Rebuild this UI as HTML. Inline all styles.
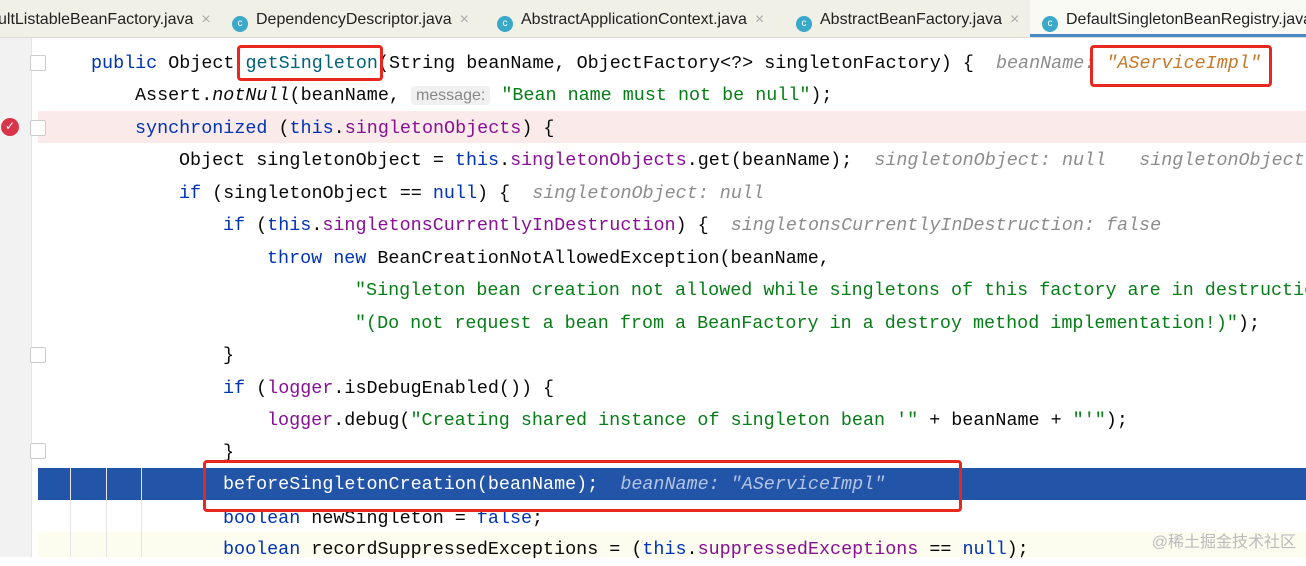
<!DOCTYPE html><html><head><style>
body{margin:0;width:1306px;height:557px;overflow:hidden;background:#fff;position:relative;font-family:"Liberation Mono",monospace}
.tabs{position:absolute;left:0;top:0;width:1306px;height:37px;background:#f0f0e6;border-bottom:1px solid #dcdcd2;font-family:"Liberation Sans",sans-serif;font-size:16px;color:#222}
.tab{position:absolute;top:0;height:37px;line-height:40px;white-space:nowrap}
.ic{display:inline-block;width:16px;height:16px;border-radius:50%;background:#3aa8c9;color:#fff;font-size:10px;line-height:16px;text-align:center;vertical-align:-2px;margin-right:8px}
.x{color:#aaa;margin-left:8px}
.gut{position:absolute;left:0;top:38px;width:31px;height:519px;background:#f2f2f2;border-right:1px solid #e4e4e4}
.ln{position:absolute;left:0;width:1306px;height:32px;font-size:18.4px;line-height:32px;white-space:pre;color:#080808}
.k{color:#0033b3}.s{color:#067d17}.f{color:#871094}.m{color:#00627a}
.h{color:#8c8c8c;font-style:italic}.o{color:#c7782b;font-style:italic}
.box{position:absolute;border:3px solid #e8281e;border-radius:4px}
.fold{position:absolute;left:30px;width:14px;height:14px;border:1px solid #ccc;background:#fff;border-radius:2px}
.g{position:absolute;width:1px;background:#e6e6e6}
.pill{font-family:"Liberation Sans",sans-serif;font-size:16px;color:#888;background:#f0f0f0;border-radius:4px;padding:1px 5px}
</style></head><body>
<div class="tabs">
<div class="tab" style="left:-2px">ultListableBeanFactory.java<span class="x">×</span></div>
<div class="tab" style="left:232px"><span class="ic">c</span>DependencyDescriptor.java<span class="x">×</span></div>
<div class="tab" style="left:497px"><span class="ic">c</span>AbstractApplicationContext.java<span class="x">×</span></div>
<div class="tab" style="left:796px"><span class="ic">c</span>AbstractBeanFactory.java<span class="x">×</span></div>
<div class="tab" style="left:1030px;width:290px;padding-left:12px;background:#fafaf5;border-bottom:3px solid #4a88c7;box-sizing:border-box;height:37px"><span class="ic">c</span>DefaultSingletonBeanRegistry.java</div>
</div>
<div class="gut"></div>
<div style="position:absolute;left:38px;top:111px;width:1268px;height:32px;background:#fbeaea"></div>
<div style="position:absolute;left:38px;top:468px;width:1268px;height:32px;background:#2254a8"></div>
<div style="position:absolute;left:38px;top:532px;width:1268px;height:25px;background:#fcfcef"></div>
<div class="g" style="left:70px;top:468px;height:89px"></div>
<div class="g" style="left:106px;top:468px;height:89px"></div>
<div class="g" style="left:141px;top:468px;height:89px"></div>
<div class="fold" style="top:55px"></div><div class="fold" style="top:120px"></div>
<div class="fold" style="top:347px"></div><div class="fold" style="top:443px"></div>
<div style="position:absolute;left:1px;top:118px;width:18px;height:18px;border-radius:50%;background:#d9354a;color:#fff;font-size:12px;line-height:18px;text-align:center">✓</div>
<div class="ln" style="top:48px;padding-left:91px"><span class="k">public</span> Object <span class="m">getSingleton</span>(String beanName, ObjectFactory&lt;?&gt; singletonFactory) {  <span class="h">beanName: </span><span class="o">"AServiceImpl"</span>    <span class="h">s</span></div>
<div class="ln" style="top:80px;padding-left:135px">Assert.<i>notNull</i>(beanName, <span class="pill">message:</span> <span class="s">"Bean name must not be null"</span>);</div>
<div class="ln" style="top:113px;padding-left:135px"><span class="k">synchronized</span> (<span class="k">this</span>.<span class="f">singletonObjects</span>) {</div>
<div class="ln" style="top:145px;padding-left:179px">Object singletonObject = <span class="k">this</span>.<span class="f">singletonObjects</span>.get(beanName);  <span class="h">singletonObject: null   singletonObject</span></div>
<div class="ln" style="top:178px;padding-left:179px"><span class="k">if</span> (singletonObject == <span class="k">null</span>) {  <span class="h">singletonObject: null</span></div>
<div class="ln" style="top:210px;padding-left:223px"><span class="k">if</span> (<span class="k">this</span>.<span class="f">singletonsCurrentlyInDestruction</span>) {  <span class="h">singletonsCurrentlyInDestruction: false</span></div>
<div class="ln" style="top:243px;padding-left:267px"><span class="k">throw new</span> BeanCreationNotAllowedException(beanName,</div>
<div class="ln" style="top:275px;padding-left:355px"><span class="s">"Singleton bean creation not allowed while singletons of this factory are in destruction"</span></div>
<div class="ln" style="top:308px;padding-left:355px"><span class="s">"(Do not request a bean from a BeanFactory in a destroy method implementation!)"</span>);</div>
<div class="ln" style="top:340px;padding-left:223px">}</div>
<div class="ln" style="top:373px;padding-left:223px"><span class="k">if</span> (<span class="f">logger</span>.isDebugEnabled()) {</div>
<div class="ln" style="top:405px;padding-left:267px"><span class="f">logger</span>.debug(<span class="s">"Creating shared instance of singleton bean '"</span> + beanName + <span class="s">"'"</span>);</div>
<div class="ln" style="top:437px;padding-left:223px">}</div>
<div class="ln" style="top:469px;padding-left:223px;color:#fff">beforeSingletonCreation(beanName);  <span style="font-style:italic;color:#b4c4e4">beanName: "AServiceImpl"</span></div>
<div class="ln" style="top:503px;padding-left:223px"><span class="k">boolean</span> newSingleton = <span class="k">false</span>;</div>
<div class="ln" style="top:534px;padding-left:223px"><span class="k">boolean</span> recordSuppressedExceptions = (<span class="k">this</span>.<span class="f">suppressedExceptions</span> == <span class="k">null</span>);</div>
<div class="box" style="left:237px;top:45px;width:140px;height:30px"></div>
<div class="box" style="left:1090px;top:45px;width:176px;height:36px"></div>
<div class="box" style="left:203px;top:460px;width:753px;height:46px"></div>
<div style="position:absolute;right:10px;top:528px;font-family:'Liberation Sans','Noto Sans CJK SC',sans-serif;font-size:16px;color:#bbb">@稀土掘金技术社区</div>
</body></html>
